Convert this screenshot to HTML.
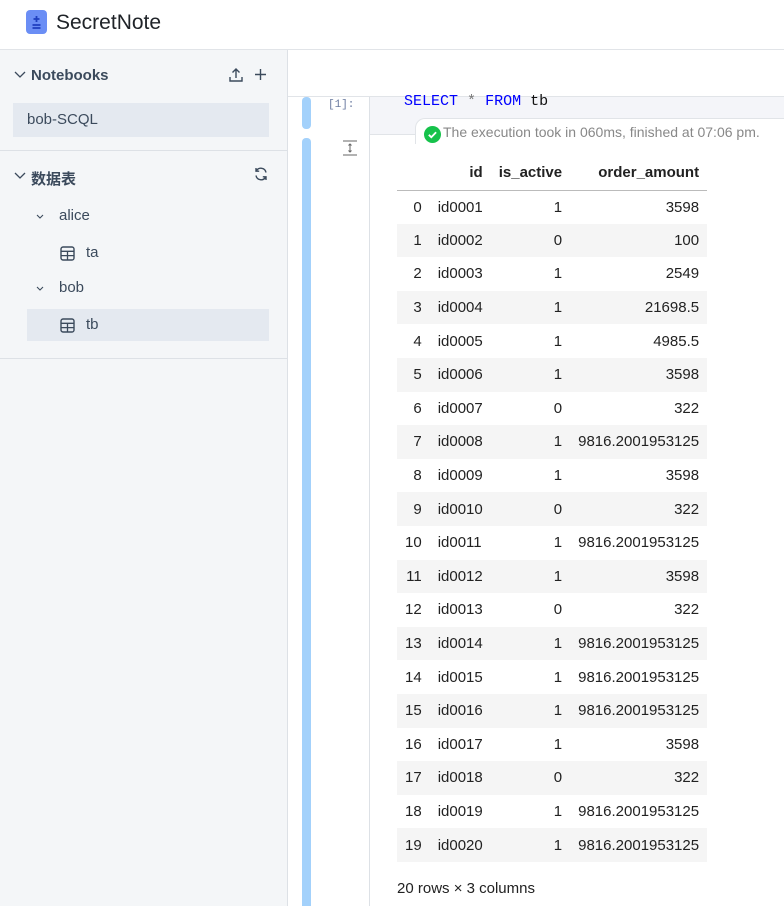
<!DOCTYPE html>
<html style="width:784px;height:906px;overflow:hidden"><head><meta charset="utf-8"><style>
*{box-sizing:border-box;margin:0;padding:0}
body{width:784px;height:906px;overflow:hidden;background:#fff;font-family:"Liberation Sans","Noto Sans CJK SC",sans-serif;color:#1f2328;position:relative}
.hdr{position:absolute;left:0;top:0;width:784px;height:50px;border-bottom:1px solid #e1e4e8;background:#fff}
.logo{position:absolute;left:26px;top:10px;width:21px;height:24px;background:#6b8ef5;border-radius:4px}
.title{position:absolute;left:56px;top:11px;font-size:21px;color:#1f2328}
.side{position:absolute;left:0;top:50px;width:288px;height:856px;background:#f4f6f8;border-right:1px solid #dde1e6}
.sec{position:absolute;left:0;width:287px;font-size:15px;font-weight:bold;color:#3b4a5c}
.item{position:absolute;font-size:15px;color:#3b4a5c}
.main{position:absolute;left:288px;top:50px;width:496px;height:856px;overflow:hidden}
.bar{position:absolute;left:14px;width:9px;background:#a3d1fb;border-radius:4px}
table{position:absolute;left:109px;top:105px;border-collapse:collapse;font-size:15px;color:#222}
td,th{height:33.6px;padding:0 8px;text-align:right}
th{font-weight:bold;border-bottom:1px solid #bbb;height:35px}
tr.o td{background:#f5f5f5}
td.l{text-align:left}
</style></head><body>
<div class="hdr">
<div class="logo"><svg width="21" height="24" viewBox="0 0 21 24"><path d="M10.5 6v6M7.5 9h6M6.5 15h8M6.5 18h8" stroke="#1f3fbf" stroke-width="1.8" fill="none"/></svg></div>
<div class="title">SecretNote</div>
</div>
<div class="side">
<div class="sec" style="top:17px"><svg style="position:absolute;left:14px;top:4px" width="12" height="8" viewBox="0 0 12 8"><path d="M1 1l5 5 5-5" stroke="#3b4a5c" stroke-width="1.3" fill="none"/></svg><span style="position:absolute;left:31px">Notebooks</span>
<svg style="position:absolute;left:228px;top:0" width="16" height="16" viewBox="0 0 16 16"><path d="M8 11V2M4.5 5.5L8 2l3.5 3.5M2 10v4h12v-4" stroke="#3b4a5c" stroke-width="1.4" fill="none"/></svg>
<svg style="position:absolute;left:253px;top:0" width="15" height="15" viewBox="0 0 15 15"><path d="M7.5 2v11M2 7.5h11" stroke="#3b4a5c" stroke-width="1.4"/></svg></div>
<div style="position:absolute;left:13px;top:53px;width:256px;height:34px;background:#e4e9f0"></div>
<div class="item" style="left:27px;top:61px">bob-SCQL</div>
<div style="position:absolute;left:0;top:100px;width:287px;border-top:1px solid #dde1e6"></div>
<div class="sec" style="top:118px"><svg style="position:absolute;left:14px;top:4px" width="12" height="8" viewBox="0 0 12 8"><path d="M1 1l5 5 5-5" stroke="#3b4a5c" stroke-width="1.3" fill="none"/></svg><span style="position:absolute;left:31px">数据表</span>
<svg style="position:absolute;left:253px;top:-2px" width="16" height="16" viewBox="0 0 16 16"><path d="M13 6.5A5.2 5.2 0 0 0 3.3 5M3 9.5a5.2 5.2 0 0 0 9.7 1.5M3 2v3.2h3.2M13 14v-3.2H9.8" stroke="#3b4a5c" stroke-width="1.4" fill="none"/></svg></div>
<svg style="position:absolute;left:36px;top:164px" width="8" height="5" viewBox="0 0 8 5"><path d="M1 1l3 3 3-3" stroke="#3b4a5c" stroke-width="1.1" fill="none"/></svg><div class="item" style="left:59px;top:157px">alice</div>
<svg style="position:absolute;left:60px;top:196px" width="15" height="15" viewBox="0 0 15 15"><rect x="1" y="1" width="13" height="13" rx="2" stroke="#3b4a5c" stroke-width="1.4" fill="none"/><path d="M1 5.3h13M1 9.6h13M7.5 5.3V14" stroke="#3b4a5c" stroke-width="1.3"/></svg>
<div class="item" style="left:86px;top:194px">ta</div>
<svg style="position:absolute;left:36px;top:236px" width="8" height="5" viewBox="0 0 8 5"><path d="M1 1l3 3 3-3" stroke="#3b4a5c" stroke-width="1.1" fill="none"/></svg><div class="item" style="left:59px;top:229px">bob</div>
<div style="position:absolute;left:27px;top:259px;width:242px;height:32px;background:#e4e9f0"></div>
<svg style="position:absolute;left:60px;top:268px" width="15" height="15" viewBox="0 0 15 15"><rect x="1" y="1" width="13" height="13" rx="2" stroke="#3b4a5c" stroke-width="1.4" fill="none"/><path d="M1 5.3h13M1 9.6h13M7.5 5.3V14" stroke="#3b4a5c" stroke-width="1.3"/></svg>
<div class="item" style="left:86px;top:266px">tb</div>
<div style="position:absolute;left:0;top:308px;width:287px;border-top:1px solid #dde1e6"></div>
</div>
<div class="main">
<div style="position:absolute;left:0;top:46px;right:0;border-top:1px solid #e1e4e8"></div>
<div class="bar" style="top:47px;height:32px"></div>
<div class="bar" style="top:88px;height:800px"></div>
<div style="position:absolute;left:81px;top:47px;height:820px;border-left:1px solid #dde1e6"></div>
<div style="position:absolute;left:82px;top:47px;right:0;height:38px;background:#f4f5f9;border-bottom:1px solid #e1e4e8"></div>
<div style="position:absolute;left:40px;top:49px;font:11px 'Liberation Mono',monospace;color:#6b7ba0">[1]:</div>
<div style="position:absolute;left:116px;top:43px;font:15px 'Liberation Mono',monospace;color:#111"><span style="color:#0000ff">SELECT</span> <span style="color:#777">*</span> <span style="color:#0000ff">FROM</span> tb</div>
<div style="position:absolute;left:127px;top:68px;width:400px;height:26px;background:#fff;border:1px solid #e1e4e8;border-radius:10px 0 0 0;border-right:none;border-bottom:none"></div>
<svg style="position:absolute;left:136px;top:76px" width="17" height="17" viewBox="0 0 17 17"><circle cx="8.5" cy="8.5" r="8.5" fill="#16c24b"/><path d="M4.8 8.8l2.5 2.4 4.8-5" stroke="#fff" stroke-width="1.8" fill="none"/></svg>
<div style="position:absolute;left:155px;top:74px;font-size:14px;color:#888">The execution took in 060ms, finished at 07:06 pm.</div>
<svg style="position:absolute;left:55px;top:90px" width="14" height="16" viewBox="0 0 14 16"><path d="M0 1h14M0 15h14M7 4v8M5.5 5.5L7 4l1.5 1.5M5.5 10.5L7 12l1.5-1.5" stroke="#666" stroke-width="1" fill="none"/></svg>
<table>
<tr><th></th><th>id</th><th>is_active</th><th>order_amount</th></tr>
<tr><td>0</td><td class="l">id0001</td><td>1</td><td>3598</td></tr>
<tr class="o"><td>1</td><td class="l">id0002</td><td>0</td><td>100</td></tr>
<tr><td>2</td><td class="l">id0003</td><td>1</td><td>2549</td></tr>
<tr class="o"><td>3</td><td class="l">id0004</td><td>1</td><td>21698.5</td></tr>
<tr><td>4</td><td class="l">id0005</td><td>1</td><td>4985.5</td></tr>
<tr class="o"><td>5</td><td class="l">id0006</td><td>1</td><td>3598</td></tr>
<tr><td>6</td><td class="l">id0007</td><td>0</td><td>322</td></tr>
<tr class="o"><td>7</td><td class="l">id0008</td><td>1</td><td>9816.2001953125</td></tr>
<tr><td>8</td><td class="l">id0009</td><td>1</td><td>3598</td></tr>
<tr class="o"><td>9</td><td class="l">id0010</td><td>0</td><td>322</td></tr>
<tr><td>10</td><td class="l">id0011</td><td>1</td><td>9816.2001953125</td></tr>
<tr class="o"><td>11</td><td class="l">id0012</td><td>1</td><td>3598</td></tr>
<tr><td>12</td><td class="l">id0013</td><td>0</td><td>322</td></tr>
<tr class="o"><td>13</td><td class="l">id0014</td><td>1</td><td>9816.2001953125</td></tr>
<tr><td>14</td><td class="l">id0015</td><td>1</td><td>9816.2001953125</td></tr>
<tr class="o"><td>15</td><td class="l">id0016</td><td>1</td><td>9816.2001953125</td></tr>
<tr><td>16</td><td class="l">id0017</td><td>1</td><td>3598</td></tr>
<tr class="o"><td>17</td><td class="l">id0018</td><td>0</td><td>322</td></tr>
<tr><td>18</td><td class="l">id0019</td><td>1</td><td>9816.2001953125</td></tr>
<tr class="o"><td>19</td><td class="l">id0020</td><td>1</td><td>9816.2001953125</td></tr>
</table>
<div style="position:absolute;left:109px;top:830px;font-size:15px;color:#222">20 rows × 3 columns</div>
</div>
</body></html>
